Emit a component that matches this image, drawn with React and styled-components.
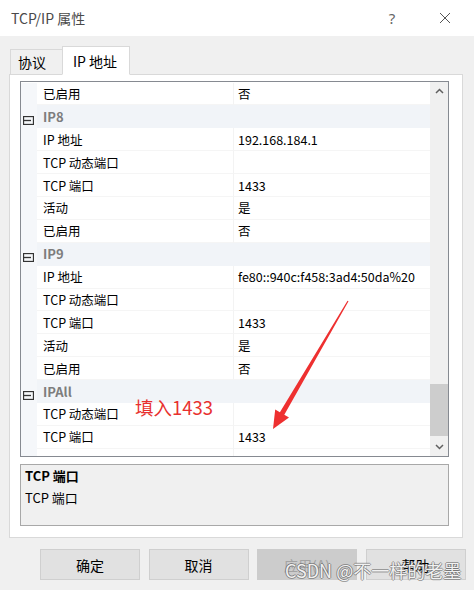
import React from "react";
import styled, { createGlobalStyle } from "styled-components";

const Global = createGlobalStyle`
  html, body { margin: 0; padding: 0; background: #f0f0f0; }
  * { box-sizing: border-box; }
  body { font-family: "Noto Sans CJK SC", "Noto Sans", sans-serif; }
`;

const Window = styled.div`
  position: relative;
  width: 474px;
  height: 590px;
  background: #f0f0f0;
  display: flex;
  flex-direction: column;
  overflow: hidden;
  font-family: "Noto Sans CJK SC", "Noto Sans", sans-serif;
`;

const TitleBar = styled.div`
  height: 36px;
  background: #ffffff;
  display: flex;
  align-items: center;
  padding-left: 11px;
  padding-right: 6px;
  gap: 7px;
  color: #4a4a4a;
  font-size: 14px;
`;

const TitleText = styled.div`
  flex: 1;
  line-height: 18px;
`;

const TitleButton = styled.div`
  width: 46px;
  height: 36px;
  display: flex;
  align-items: center;
  justify-content: center;
  color: #666;
  font-size: 15px;
  font-family: "Noto Sans", sans-serif;
`;

const TabRow = styled.div`
  display: flex;
  align-items: flex-end;
  margin-top: 9px;
  padding-left: 10px;
  height: 29px;
  position: relative;
  z-index: 1;
`;

const Tab = styled.div`
  height: ${(p) => (p.$active ? "29px" : "25px")};
  padding: ${(p) => (p.$active ? "0 12px 0 10px" : "0 16px 0 7px")};
  display: flex;
  align-items: center;
  font-size: 14px;
  color: #000;
  background: ${(p) => (p.$active ? "#ffffff" : "#f0f0f0")};
  border: 1px solid #d9d9d9;
  border-bottom: ${(p) => (p.$active ? "1px solid #ffffff" : "none")};
  border-right: ${(p) => (p.$active ? "1px solid #d9d9d9" : "none")};
  margin-bottom: ${(p) => (p.$active ? "-1px" : "0")};
`;

const Panel = styled.div`
  margin: 0 11px 0 9px;
  height: 464px;
  background: #ffffff;
  border: 1px solid #d9d9d9;
  padding: 6px 13px 11px 10px;
  display: flex;
  flex-direction: column;
`;

const Grid = styled.div`
  height: 376px;
  border: 1px solid #868a91;
  display: flex;
  background: #ffffff;
`;

const GridBody = styled.div`
  flex: 1;
  overflow: hidden;
  padding-top: 0.5px;
  font-size: 12.5px;
`;

const Row = styled.div`
  display: flex;
  height: 22.9px;
  background: ${(p) => (p.$category ? "#f1f4f8" : "#ffffff")};
`;

const Gutter = styled.div`
  width: 16px;
  flex: none;
  background: #f5f7fa;
  padding: 4.5px 0 0 2px;
`;

const LabelCell = styled.div`
  width: 197px;
  flex: none;
  padding-left: 6px;
  display: flex;
  align-items: center;
  color: ${(p) => (p.$category ? "#7d7d7d" : "#000")};
  font-weight: ${(p) => (p.$category ? 700 : 400)};
  font-size: ${(p) => (p.$category ? "13px" : "12.5px")};
  border-bottom: 1px solid ${(p) => (p.$category ? "transparent" : "#f5f5f5")};
  border-right: 1px solid ${(p) => (p.$category ? "transparent" : "#f3f3f3")};
  white-space: nowrap;
`;

const ValueCell = styled.div`
  flex: 1;
  padding-left: 4px;
  display: flex;
  align-items: center;
  color: #000;
  border-bottom: 1px solid ${(p) => (p.$category ? "transparent" : "#f5f5f5")};
  white-space: nowrap;
  overflow: hidden;
`;

const Scrollbar = styled.div`
  width: 18px;
  flex: none;
  background: #f0f0f0;
  display: flex;
  flex-direction: column;
`;

const ScrollArrow = styled.div`
  height: 18px;
  display: flex;
  align-items: center;
  justify-content: center;
`;

const Track = styled.div`
  flex: 1;
  display: flex;
  flex-direction: column;
  justify-content: flex-end;
  padding-bottom: 2px;
`;

const Thumb = styled.div`
  height: 52px;
  background: #cdcdcd;
`;

const Description = styled.div`
  margin-top: 7px;
  height: 62px;
  border: 1px solid #a8a8a8;
  background: #f0f0f0;
  padding: 0 4px;
  font-size: 13px;
  line-height: 22px;
  color: #000;
`;

const DescTitle = styled.div`
  font-weight: 700;
`;

const ButtonRow = styled.div`
  display: flex;
  gap: 8.5px;
  margin-top: 11px;
  padding-left: 40px;
`;

const Button = styled.div`
  width: 100px;
  height: 31px;
  display: flex;
  align-items: center;
  justify-content: center;
  font-size: 14px;
  color: ${(p) => (p.$disabled ? "#a3a3a3" : "#000")};
  background: ${(p) => (p.$disabled ? "#cccccc" : "#e1e1e1")};
  border: 1px solid ${(p) => (p.$disabled ? "#cccccc" : "#cfcfcf")};
`;

const Annotation = styled.div`
  position: absolute;
  left: 135px;
  top: 394px;
  font-size: 18.5px;
  line-height: 26px;
  color: #e8302e;
`;

const ArrowSvg = styled.svg`
  position: absolute;
  left: 0;
  top: 0;
  pointer-events: none;
`;

const Watermark = styled.div`
  position: absolute;
  left: 285px;
  top: 558px;
  font-size: 18px;
  line-height: 24px;
  color: rgba(255, 255, 255, 0.92);
  text-shadow: 1px 0 0 rgba(90, 90, 90, 0.55), -1px 0 0 rgba(90, 90, 90, 0.55),
    0 1px 0 rgba(90, 90, 90, 0.55), 0 -1px 0 rgba(90, 90, 90, 0.55);
  white-space: nowrap;
`;

const MinusBox = () => (
  <svg width="11" height="9" viewBox="0 0 11 9">
    <rect x="0.5" y="0.5" width="10" height="8" fill="none" stroke="#333" strokeWidth="1.3" />
    <line x1="1" y1="4.5" x2="8" y2="4.5" stroke="#333" strokeWidth="1.3" />
  </svg>
);

const Chevron = ({ up }) => (
  <svg width="9" height="6" viewBox="0 0 9 6">
    <polyline
      points={up ? "1,5 4.5,1.5 8,5" : "1,1 4.5,4.5 8,1"}
      fill="none"
      stroke="#606060"
      strokeWidth="1.5"
    />
  </svg>
);

const rows = [
  { l: "已启用", v: "否" },
  { c: "IP8" },
  { l: "IP 地址", v: "192.168.184.1" },
  { l: "TCP 动态端口", v: "" },
  { l: "TCP 端口", v: "1433" },
  { l: "活动", v: "是" },
  { l: "已启用", v: "否" },
  { c: "IP9" },
  { l: "IP 地址", v: "fe80::940c:f458:3ad4:50da%20" },
  { l: "TCP 动态端口", v: "" },
  { l: "TCP 端口", v: "1433" },
  { l: "活动", v: "是" },
  { l: "已启用", v: "否" },
  { c: "IPAll" },
  { l: "TCP 动态端口", v: "" },
  { l: "TCP 端口", v: "1433" },
  { l: "", v: "" },
];

export default function App() {
  return (
    <Window>
      <Global />
      <TitleBar>
        <TitleText>TCP/IP 属性</TitleText>
        <TitleButton>?</TitleButton>
        <TitleButton>
          <svg width="12" height="12" viewBox="0 0 12 12">
            <path d="M1 1 L11 11 M11 1 L1 11" stroke="#555" strokeWidth="1" />
          </svg>
        </TitleButton>
      </TitleBar>
      <TabRow>
        <Tab>协议</Tab>
        <Tab $active>IP 地址</Tab>
      </TabRow>
      <Panel>
        <Grid>
          <GridBody>
            {rows.map((r, i) =>
              r.c ? (
                <Row key={i} $category>
                  <Gutter>
                    <MinusBox />
                  </Gutter>
                  <LabelCell $category>{r.c}</LabelCell>
                  <ValueCell $category />
                </Row>
              ) : (
                <Row key={i}>
                  <Gutter />
                  <LabelCell>{r.l}</LabelCell>
                  <ValueCell>{r.v}</ValueCell>
                </Row>
              )
            )}
          </GridBody>
          <Scrollbar>
            <ScrollArrow>
              <Chevron up />
            </ScrollArrow>
            <Track>
              <Thumb />
            </Track>
            <ScrollArrow>
              <Chevron />
            </ScrollArrow>
          </Scrollbar>
        </Grid>
        <Description>
          <DescTitle>TCP 端口</DescTitle>
          <div>TCP 端口</div>
        </Description>
      </Panel>
      <ButtonRow>
        <Button>确定</Button>
        <Button>取消</Button>
        <Button $disabled>应用(A)</Button>
        <Button>帮助</Button>
      </ButtonRow>
      <Annotation>填入1433</Annotation>
      <ArrowSvg width="474" height="590" viewBox="0 0 474 590">
        <polygon
          points="348.5,301.3 284.3,414.8 289,417.5 273,429 275.2,409.5 279.9,412.2 347.5,300.7"
          fill="#ee3030"
        />
      </ArrowSvg>
      <Watermark>CSDN @不一样的老墨</Watermark>
    </Window>
  );
}
